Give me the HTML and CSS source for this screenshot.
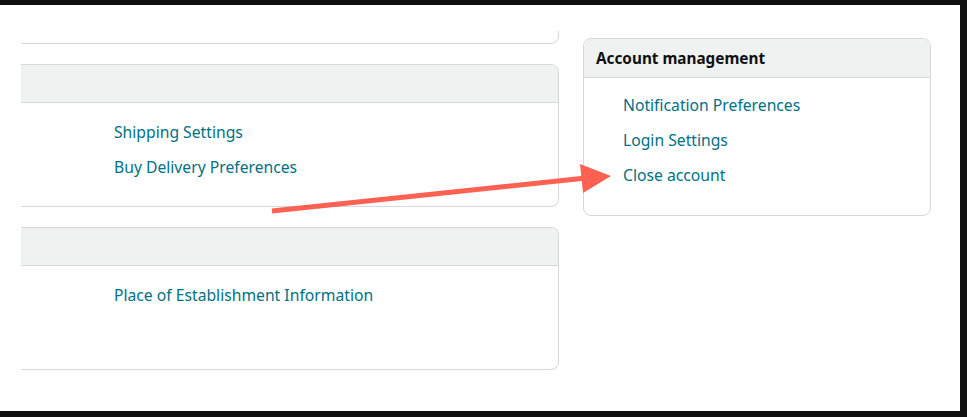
FILE: index.html
```
<!DOCTYPE html>
<html lang="en">
<head>
    <meta charset="UTF-8">
    <meta name="viewport" content="width=device-width, initial-scale=1.0">
    <title>Your Account</title>
    <link rel="stylesheet" href="styles.css">
</head>
<body>
    <div class="screen">
        <div class="main-col">
            <div class="card card-top"></div>

            <div class="card">
                <div class="card-head"></div>
                <ul class="card-links">
                    <li><a href="#">Shipping Settings</a></li>
                    <li><a href="#">Buy Delivery Preferences</a></li>
                </ul>
            </div>

            <div class="card card-short">
                <div class="card-head"></div>
                <ul class="card-links">
                    <li><a href="#">Place of Establishment Information</a></li>
                </ul>
            </div>
        </div>

        <div class="side-col">
            <div class="card side-card">
                <div class="card-head">Account management</div>
                <ul class="card-links">
                    <li><a href="#">Notification Preferences</a></li>
                    <li><a href="#">Login Settings</a></li>
                    <li><a href="#">Close account</a></li>
                </ul>
            </div>
        </div>
    </div>

    <!-- annotation arrow drawn over the page -->
    <svg class="arrow" width="967" height="417" viewBox="0 0 967 417">
        <line x1="272" y1="211" x2="586" y2="178" stroke="#fd6151" stroke-width="5"/>
        <polygon points="580,164 611,176 583,193" fill="#fd6151"/>
    </svg>
</body>
</html>
```

FILE: styles.css
```
body {
    margin: 0;
    background: #111;
    font-family: 'Noto Sans', 'Liberation Sans', Arial, sans-serif;
    position: relative;
    width: 967px;
    height: 417px;
    overflow: hidden;
}
.screen {
    margin: 5px 7px 0 0;
    height: 406px;
    background: #fff;
    display: flex;
    gap: 24px;
}
.main-col {
    width: 538px;
    padding-left: 21px;
    display: flex;
    flex-direction: column;
    gap: 20px;
}
.side-col {
    width: 348px;
    padding-top: 33px;
}
.card {
    border: 1px solid #d5d9d9;
    border-left: none;
    border-radius: 0 8px 8px 0;
    background: #fff;
    overflow: hidden;
}
.card-top {
    margin-top: 26px;
    height: 12px;
    border-top: none;
    border-radius: 0 0 8px 0;
}
.card-head {
    height: 37px;
    background: #f0f2f2;
    border-bottom: 1px solid #d5d9d9;
    font-size: 15.3px;
    font-weight: bold;
    color: #0f1111;
    line-height: 38px;
    padding-left: 12px;
}
.card-links {
    list-style-type: none;
    margin: 0;
    padding: 12px 0 0 93px;
    height: 91px;
}
.card-links li {
    line-height: 35px;
    font-size: 15.7px;
}
.card-links a {
    color: #007185;
    text-decoration: none;
}
.side-card {
    border-left: 1px solid #d5d9d9;
    border-radius: 8px;
}
.side-card .card-head {
    height: 38px;
}
.side-card .card-links {
    padding: 10px 0 0 39px;
    height: 127px;
}
.arrow {
    position: absolute;
    top: 0;
    left: 0;
    pointer-events: none;
}
```
